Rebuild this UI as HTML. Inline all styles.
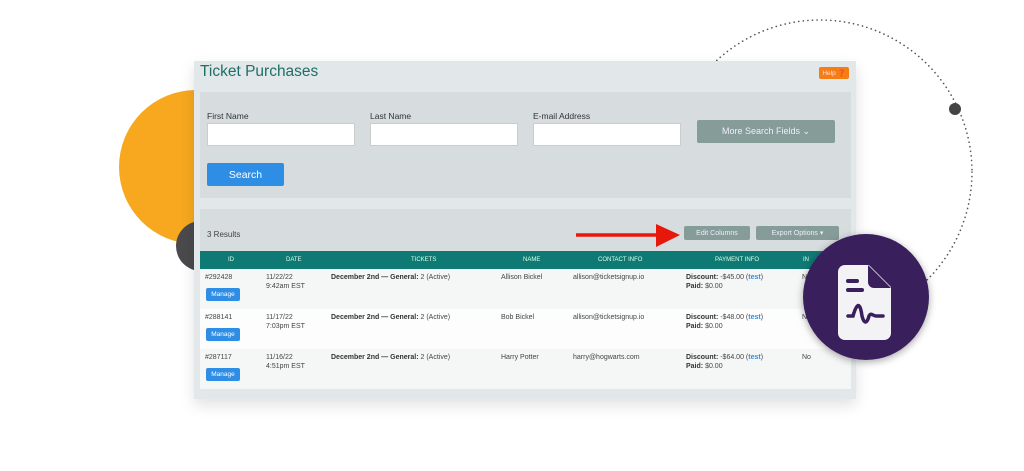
<!DOCTYPE html>
<html><head><style>
*{margin:0;padding:0;box-sizing:border-box}
body{width:1024px;height:471px;background:#fff;position:relative;overflow:hidden;font-family:"Liberation Sans",sans-serif}
.a{position:absolute}
.panel{left:194px;top:61px;width:662px;height:338px;background:#e2e8ea;box-shadow:0 6px 14px rgba(0,0,0,.12)}
.lbl{font-size:8.5px;color:#333}
.inp{background:#fff;border:1px solid #ccc;height:23px;width:148px}
.btn{background:#859c98;color:#eef;font-size:8px;border-radius:2px;display:flex;align-items:center;justify-content:center}
.t{font-size:7px;color:#444;line-height:9px}
.th{font-size:6px;color:#dfe;top:5px}
.mg{background:#2e8ee6;color:#fff;font-size:6.5px;width:34px;height:13px;display:flex;align-items:center;justify-content:center;border-radius:2px}
b{color:#333}
.bl{color:#2e8ee6;font-weight:bold}
</style></head><body>
<svg class="a" style="left:0;top:0" width="1024" height="471">
<circle cx="820" cy="172" r="152" fill="none" stroke="#555" stroke-width="1.6" stroke-dasharray="0.1 4.5" stroke-linecap="round"/>
<circle cx="955" cy="109" r="6" fill="#444"/>
<circle cx="196" cy="167" r="77" fill="#f7a81f"/>
<circle cx="201" cy="246" r="25" fill="#4a4a4c"/>
</svg>
<div class="a panel">
 <div class="a" style="left:6px;top:2px;font-size:15.5px;color:#1f6e6a;font-weight:500">Ticket Purchases</div>
 <div class="a" style="left:625px;top:6px;width:30px;height:12px;background:#f57d12;border-radius:2px;color:#fde;font-size:6.5px;display:flex;align-items:center;justify-content:center">Help ❓</div>
 <div class="a" style="left:6px;top:31px;width:651px;height:106px;background:#d7dcdf">
  <div class="a lbl" style="left:7px;top:19px">First Name</div>
  <div class="a lbl" style="left:170px;top:19px">Last Name</div>
  <div class="a lbl" style="left:333px;top:19px">E-mail Address</div>
  <div class="a inp" style="left:7px;top:31px"></div>
  <div class="a inp" style="left:170px;top:31px"></div>
  <div class="a inp" style="left:333px;top:31px"></div>
  <div class="a btn" style="left:497px;top:28px;width:138px;height:23px;font-size:9px">More Search Fields ⌄</div>
  <div class="a" style="left:7px;top:71px;width:77px;height:23px;background:#2e8ee6;color:#fff;font-size:10.5px;display:flex;align-items:center;justify-content:center;border-radius:2px">Search</div>
 </div>
 <div class="a" style="left:6px;top:148px;width:651px;height:180px;background:#d7dcdf">
  <div class="a t" style="left:7px;top:21px;font-size:8px">3 Results</div>
  <div class="a btn" style="left:484px;top:17px;width:66px;height:14px;font-size:7px">Edit Columns</div>
  <div class="a btn" style="left:556px;top:17px;width:83px;height:14px;font-size:7px">Export Options ▾</div>
  <div class="a" style="left:0;top:42px;width:651px;height:18px;background:#0f7a73"></div>
  <div class="a th" style="left:28px;top:48px">ID</div>
  <div class="a th" style="left:86px;top:48px">DATE</div>
  <div class="a th" style="left:211px;top:48px">TICKETS</div>
  <div class="a th" style="left:323px;top:48px">NAME</div>
  <div class="a th" style="left:398px;top:48px">CONTACT INFO</div>
  <div class="a th" style="left:515px;top:48px">PAYMENT INFO</div>
  <div class="a th" style="left:603px;top:48px">IN</div>
  <div class="a" style="left:0;top:60px;width:651px;height:120px;background:#f5f6f6"></div>
  <div class="a" style="left:0;top:100px;width:651px;height:40px;background:#fdfdfd"></div>
 </div>
</div>
<div class="a" style="left:200px;top:270px;width:650px">
 <div class="a t" style="left:5px;top:3px">#292428</div><div class="a mg" style="left:6px;top:18px">Manage</div>
 <div class="a t" style="left:66px;top:3px">11/22/22<br>9:42am EST</div>
 <div class="a t" style="left:131px;top:3px"><b>December 2nd — General:</b> 2 (Active)</div>
 <div class="a t" style="left:301px;top:3px">Allison Bickel</div>
 <div class="a t" style="left:373px;top:3px">allison@ticketsignup.io</div>
 <div class="a t" style="left:486px;top:3px"><b>Discount:</b> -$45.00 (<span class="bl">test</span>)<br><b>Paid:</b> $0.00</div>
 <div class="a t" style="left:602px;top:3px">No</div>
 <div class="a t" style="left:5px;top:43px">#288141</div><div class="a mg" style="left:6px;top:58px">Manage</div>
 <div class="a t" style="left:66px;top:43px">11/17/22<br>7:03pm EST</div>
 <div class="a t" style="left:131px;top:43px"><b>December 2nd — General:</b> 2 (Active)</div>
 <div class="a t" style="left:301px;top:43px">Bob Bickel</div>
 <div class="a t" style="left:373px;top:43px">allison@ticketsignup.io</div>
 <div class="a t" style="left:486px;top:43px"><b>Discount:</b> -$48.00 (<span class="bl">test</span>)<br><b>Paid:</b> $0.00</div>
 <div class="a t" style="left:602px;top:43px">No</div>
 <div class="a t" style="left:5px;top:83px">#287117</div><div class="a mg" style="left:6px;top:98px">Manage</div>
 <div class="a t" style="left:66px;top:83px">11/16/22<br>4:51pm EST</div>
 <div class="a t" style="left:131px;top:83px"><b>December 2nd — General:</b> 2 (Active)</div>
 <div class="a t" style="left:301px;top:83px">Harry Potter</div>
 <div class="a t" style="left:373px;top:83px">harry@hogwarts.com</div>
 <div class="a t" style="left:486px;top:83px"><b>Discount:</b> -$64.00 (<span class="bl">test</span>)<br><b>Paid:</b> $0.00</div>
 <div class="a t" style="left:602px;top:83px">No</div>
</div>
<svg class="a" style="left:570px;top:222px" width="115" height="28">
<line x1="6" y1="13" x2="90" y2="13" stroke="#e8170c" stroke-width="3.5"/>
<polygon points="86,2 110,13 86,25" fill="#e8170c"/>
</svg>
<div class="a" style="left:803px;top:234px;width:126px;height:126px;border-radius:50%;box-shadow:0 2px 8px rgba(0,0,0,.35)"></div>
<svg class="a" style="left:795px;top:226px" width="142" height="142">
<circle cx="71" cy="71" r="63" fill="#3a1f5d"/>
<path d="M50 39 h24 l22 22 v46 a7 7 0 0 1-7 7 h-39 a7 7 0 0 1-7-7 v-61 a7 7 0 0 1 7-7z" fill="#f3f3f5"/>
<path d="M73 39 v17 a6 6 0 0 0 6 6 h17" fill="#3a1f5d"/>
<line x1="53" y1="55" x2="62" y2="55" stroke="#3a1f5d" stroke-width="4" stroke-linecap="round"/>
<line x1="53" y1="64" x2="67" y2="64" stroke="#3a1f5d" stroke-width="4" stroke-linecap="round"/>
<path d="M53 90 h5 c4-14 7-14 9 0 c2 8 5 8 7 0 c2-4 4 0 7 0 h7" fill="none" stroke="#3a1f5d" stroke-width="3.5" stroke-linecap="round"/>
</svg>
</body></html>
